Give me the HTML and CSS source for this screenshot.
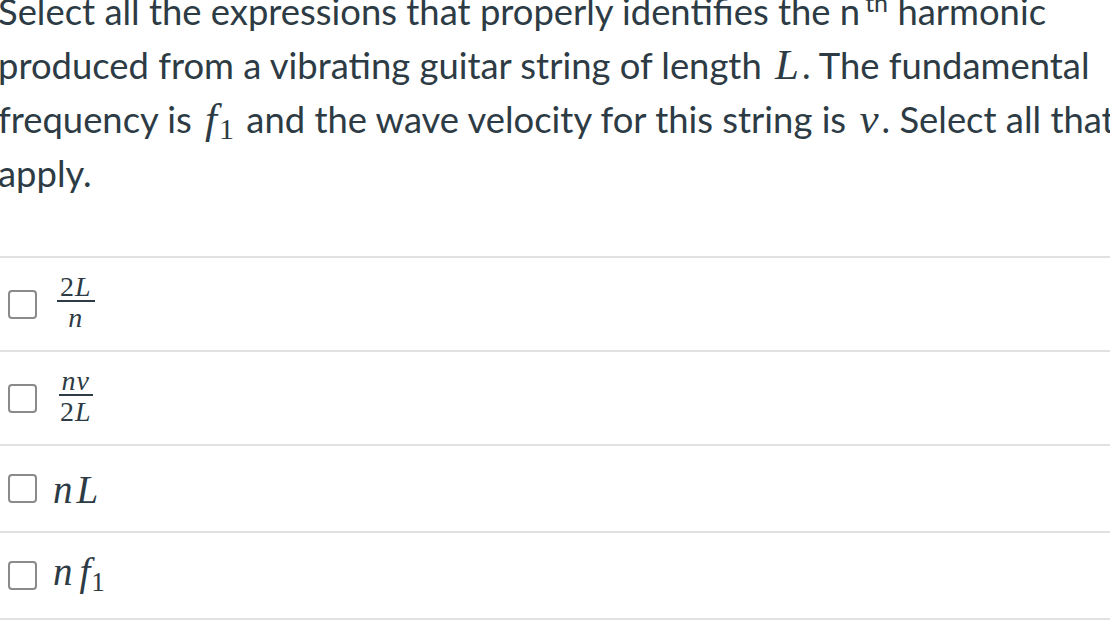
FILE: index.html
```html
<!DOCTYPE html>
<html>
<head>
<meta charset="utf-8">
<link rel="stylesheet" href="styles.css">
</head>
<body>
<div class="page">
  <p class="question">Select all the expressions that properly identifies the n<sup class="sup">th</sup> harmonic produced from a vibrating guitar string of length <span class="m">L</span>. The fundamental frequency is <span class="m">f</span><span class="sub">1</span> and the wave velocity for this string is <span class="m">v</span>. Select all that apply.</p>
  <div class="answers">
    <div class="answer tall">
      <span class="box"></span>
      <span class="frac"><span class="num"><span class="r">2</span><span class="m">L</span></span><span class="den"><span class="m">n</span></span></span>
    </div>
    <div class="answer tall">
      <span class="box"></span>
      <span class="frac"><span class="num"><span class="m">nv</span></span><span class="den"><span class="r">2</span><span class="m">L</span></span></span>
    </div>
    <div class="answer">
      <span class="box"></span>
      <span class="expr"><span class="m">nL</span></span>
    </div>
    <div class="answer">
      <span class="box"></span>
      <span class="expr"><span class="m">n</span><span class="m fi">f</span><span class="sub2">1</span></span>
    </div>
  </div>
</div>
</body>
</html>
```

FILE: styles.css
```css
html, body {
  margin: 0;
  padding: 0;
  background: #ffffff;
  overflow: hidden;
}

.page {
  width: 1135px;
  margin-left: -2px;
  margin-top: -16px;
  color: #2d3b45;
  font-family: Lato, "Noto Sans", sans-serif;
}

.question {
  margin: 0;
  font-size: 36.4px;
  line-height: 54px;
}

.sup {
  font-size: 25px;
  line-height: 0;
  vertical-align: 13px;
  margin-left: 5px;
  margin-right: 0;
}

.m {
  font-family: "Liberation Serif", "DejaVu Serif", serif;
  font-style: italic;
}

.question .m {
  font-size: 43px;
  margin: 0 3px 0 4px;
}

.sub {
  font-family: "Liberation Serif", serif;
  font-size: 30px;
  line-height: 0;
  vertical-align: -6px;
  margin-left: -1px;
  margin-right: 3px;
}

.answers {
  margin-top: 56px;
  margin-left: 2px;
  border-bottom: 2px solid #e1e1e1;
}

.answer {
  display: flex;
  align-items: center;
  gap: 18px;
  border-top: 2px solid #e1e1e1;
  height: 85px;
  padding-left: 8px;
}

.answer.tall {
  height: 92px;
}

.box {
  width: 25px;
  height: 25px;
  border: 2px solid #8a8a8a;
  border-radius: 4px;
  flex: none;
}

.frac {
  display: inline-flex;
  flex-direction: column;
  align-items: center;
  font-size: 28px;
  line-height: 25px;
  margin-top: -6px;
  margin-left: 2px;
}

.frac .m {
  letter-spacing: 1px;
}

.num {
  padding: 0 3px 1px;
  border-bottom: 2px solid #2d3b45;
}

.den {
  padding: 2px 3px 0;
}

.r {
  font-family: "Liberation Serif", serif;
  margin-right: 1px;
}

.expr {
  font-size: 39px;
  line-height: 42px;
  margin-left: -2px;
}

.expr .m {
  letter-spacing: 4px;
}

.fi {
  margin-left: 3px;
}

.sub2 {
  font-family: "Liberation Serif", serif;
  font-size: 27px;
  vertical-align: -6px;
  margin-left: -3px;
}
```
